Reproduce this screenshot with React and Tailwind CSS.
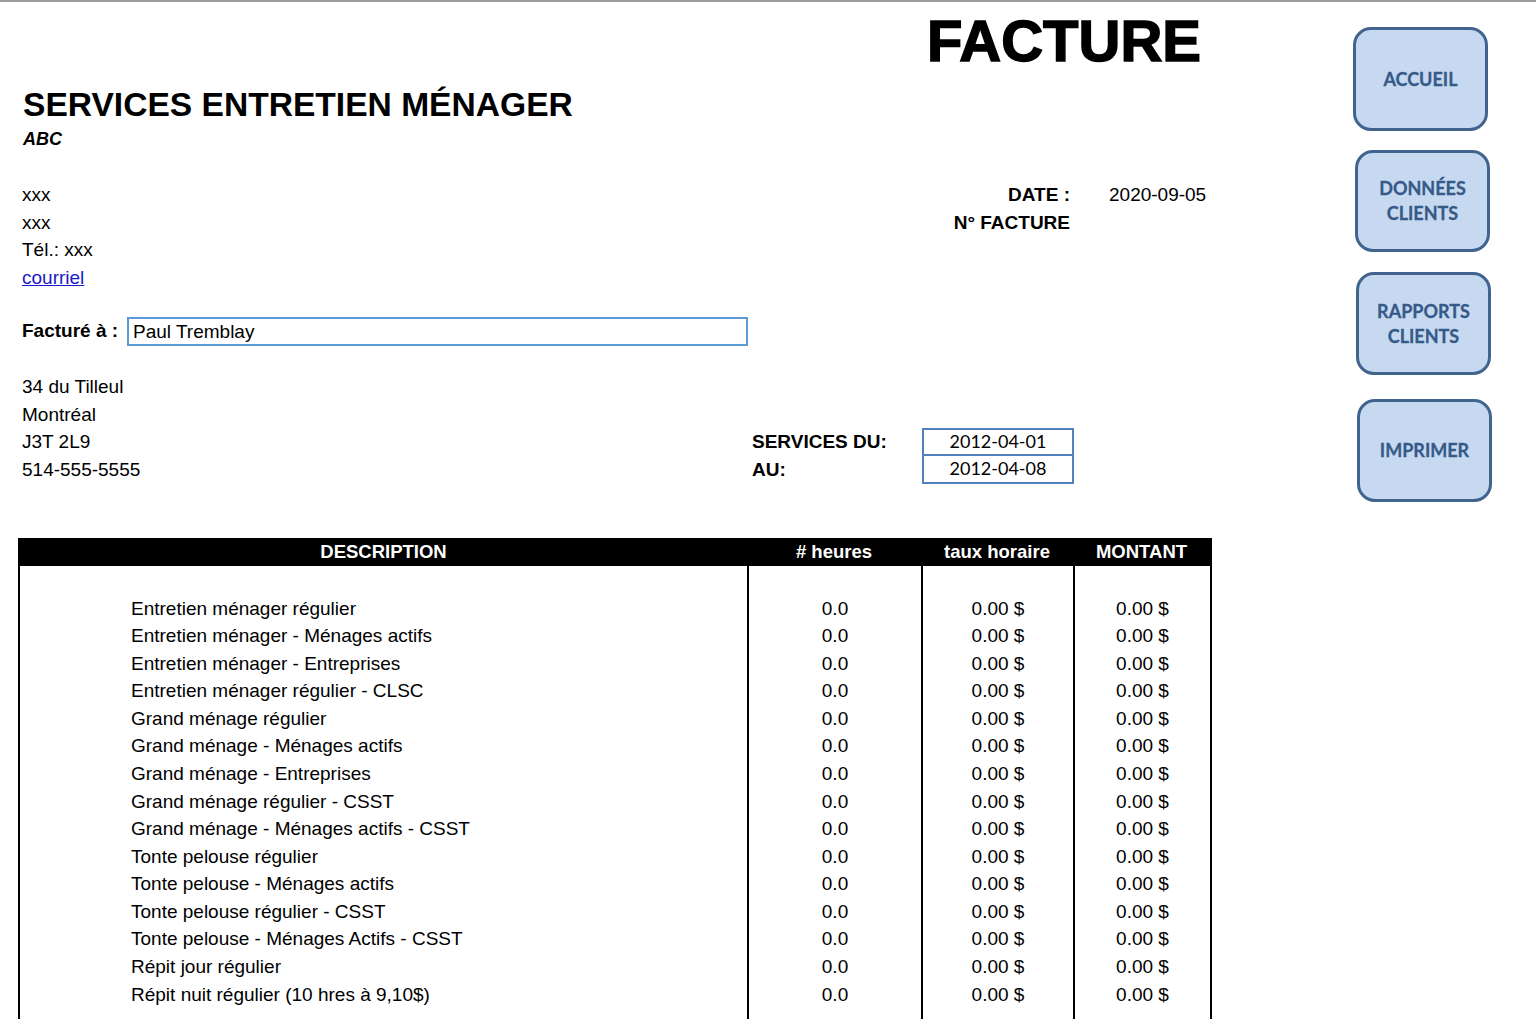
import React from 'react';

const lignes = [
  'Entretien ménager régulier',
  'Entretien ménager - Ménages actifs',
  'Entretien ménager - Entreprises',
  'Entretien ménager régulier - CLSC',
  'Grand ménage régulier',
  'Grand ménage - Ménages actifs',
  'Grand ménage - Entreprises',
  'Grand ménage régulier - CSST',
  'Grand ménage - Ménages actifs - CSST',
  'Tonte pelouse régulier',
  'Tonte pelouse - Ménages actifs',
  'Tonte pelouse régulier - CSST',
  'Tonte pelouse - Ménages Actifs - CSST',
  'Répit jour régulier',
  'Répit nuit régulier (10 hres à 9,10$)',
];

const cols = 'grid grid-cols-[727px_174px_152px_137px]';

const NavButton = ({ label, className }) => (
  <div
    className={`w-[135px] flex items-center justify-center text-center rounded-[18px] border-[3px] border-[#41648f] bg-[#c6d9f1] text-[#365a87] font-['Lato',sans-serif] font-bold text-[18px] leading-[25px] [-webkit-text-stroke:0.3px_#365a87] ${className}`}
  >
    {label}
  </div>
);

export default function App() {
  return (
    <div className="h-[1019px] w-full overflow-hidden bg-white border-t-2 border-[#9c9c9c] font-['Liberation_Sans',Arial,sans-serif] text-black">
      <div className="flex">
        {/* Facture */}
        <div className="w-[1353px] shrink-0">
          <div className="mt-[10px] w-[1201px] text-right text-[58px] leading-[58px] font-bold [-webkit-text-stroke:1.5px_black]">
            FACTURE
          </div>
          <div className="mt-[17px] pl-[23px] text-[33.6px] leading-[36px] font-bold">
            SERVICES ENTRETIEN MÉNAGER
          </div>
          <div className="mt-[5px] pl-[23px] text-[18px] leading-[22px] font-bold italic">ABC</div>

          {/* coordonnées + date */}
          <div className="mt-[31px] text-[19px] leading-[27.5px]">
            <div className="grid grid-cols-[1070px_1fr] h-[27.5px]">
              <div className="flex justify-between pl-[22px]">
                <span>xxx</span>
                <span className="font-bold">DATE :</span>
              </div>
              <div className="pl-[39px]">2020-09-05</div>
            </div>
            <div className="grid grid-cols-[1070px_1fr] h-[27.5px]">
              <div className="flex justify-between pl-[22px]">
                <span>xxx</span>
                <span className="font-bold">N° FACTURE</span>
              </div>
              <div />
            </div>
            <div className="h-[27.5px] pl-[22px]">Tél.: xxx</div>
            <div className="h-[27.5px] pl-[22px]">
              <span className="text-[#1a1ac8] underline">courriel</span>
            </div>
          </div>

          {/* facturé à */}
          <div className="mt-[26px] h-[29px] flex items-center text-[19px]">
            <span className="pl-[22px] w-[127px] font-bold">Facturé à :</span>
            <div className="w-[621px] h-[29px] border-2 border-[#5b9bd5] pl-[4px] leading-[26px]">
              Paul Tremblay
            </div>
          </div>

          {/* adresse + période */}
          <div className="mt-[27px] flex text-[19px] leading-[27.67px]">
            <div className="w-[752px] pl-[22px]">
              <div className="h-[27.67px]">34 du Tilleul</div>
              <div className="h-[27.67px]">Montréal</div>
              <div className="h-[27.67px]">J3T 2L9</div>
              <div className="h-[27.67px]">514-555-5555</div>
            </div>
            <div className="w-[170px] font-bold">
              <div className="h-[55.34px]" />
              <div className="h-[27.67px]">SERVICES DU:</div>
              <div className="h-[27.67px]">AU:</div>
            </div>
            <div className="w-[152px] font-['Lato',sans-serif] text-[18px]">
              <div className="h-[55.34px]" />
              <div className="h-[27.67px] border-2 border-[#4f81bd] flex items-center justify-center">2012-04-01</div>
              <div className="h-[27.67px] border-2 border-t-0 border-[#4f81bd] flex items-center justify-center">2012-04-08</div>
            </div>
          </div>

          {/* tableau */}
          <div className="mt-[54px] ml-[18px] w-[1194px] border-x-2 border-black">
            <div className={`${cols} h-[28px] bg-black text-white font-bold text-[18.5px] leading-[28px] text-center`}>
              <div>DESCRIPTION</div>
              <div>&#35; heures</div>
              <div>taux horaire</div>
              <div>MONTANT</div>
            </div>
            <div className={`${cols} text-[19px] leading-[27.57px]`}>
              <div className="pt-[29px] pb-[40px] pl-[111px]">
                {lignes.map((l) => (
                  <div key={l} className="h-[27.57px] whitespace-nowrap">{l}</div>
                ))}
              </div>
              <div className="pt-[29px] pb-[40px] border-l-2 border-black text-center">
                {lignes.map((l) => (
                  <div key={l} className="h-[27.57px]">0.0</div>
                ))}
              </div>
              <div className="pt-[29px] pb-[40px] border-l-2 border-black text-center">
                {lignes.map((l) => (
                  <div key={l} className="h-[27.57px]">0.00 $</div>
                ))}
              </div>
              <div className="pt-[29px] pb-[40px] border-l-2 border-black text-center">
                {lignes.map((l) => (
                  <div key={l} className="h-[27.57px]">0.00 $</div>
                ))}
              </div>
            </div>
          </div>
        </div>

        {/* navigation */}
        <div className="pt-[25px] flex flex-col">
          <NavButton label="ACCUEIL" className="h-[104px]" />
          <NavButton label={<>DONNÉES<br />CLIENTS</>} className="mt-[19px] ml-[2px] h-[102px]" />
          <NavButton label={<>RAPPORTS<br />CLIENTS</>} className="mt-[20px] ml-[3px] h-[103px]" />
          <NavButton label="IMPRIMER" className="mt-[24px] ml-[4px] h-[103px]" />
        </div>
      </div>
    </div>
  );
}
